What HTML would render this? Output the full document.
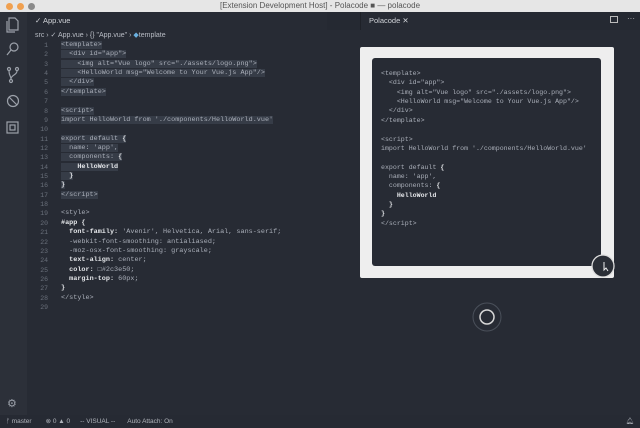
<!DOCTYPE html>
<html><head><style>
*{margin:0;padding:0;box-sizing:border-box}
body{width:640px;height:428px;overflow:hidden;background:#272b34;font-family:"Liberation Sans",sans-serif;position:relative;color:#c5c8ce}
.title{position:absolute;left:0;top:0;width:640px;height:12px;background:#e6e6e6;font-size:8px;color:#555;text-align:center;line-height:12px}
.dot{position:absolute;top:3px;width:7px;height:7px;border-radius:50%}
.act{position:absolute;left:0;top:12px;width:27px;height:403px;background:#2c3039}
.tabs{position:absolute;left:27px;top:12px;width:613px;height:18px;background:#252932}
.tab{position:absolute;top:0;height:18px;line-height:18px;font-size:7.5px;color:#d0d3d8;padding-left:8px}
.bc{position:absolute;left:35px;top:31px;font-size:7px;color:#b8bcc4}
pre{position:absolute;font-family:"Liberation Mono",monospace;font-size:6.8px;line-height:9.36px;color:#a9aeb8;white-space:pre}
.sel{background:#363c47}
b{color:#e3e5e8;font-weight:bold}
.ln{position:absolute;left:30px;top:41px;width:18px;text-align:right;font-family:"Liberation Mono",monospace;font-size:6.5px;line-height:9.36px;color:#6a707b}
.status{position:absolute;left:0;top:415px;width:640px;height:13px;background:#262a33;font-size:6.5px;color:#b0b4bb;line-height:13px}
</style></head><body>
<div class="title"><span class="dot" style="left:6px;background:#f0a050"></span><span class="dot" style="left:17px;background:#f0a050"></span><span class="dot" style="left:28px;background:#8a8a8a"></span>[Extension Development Host] - Polacode ■ — polacode</div>
<div class="act">
<svg width="27" height="140" viewBox="0 0 27 140" fill="none" stroke="#9ca1aa" stroke-width="1.2">
<path d="M9 6h6l3 3v9h-9z M7 9v11h8"/>
<circle cx="14" cy="35" r="4"/><path d="M11 38l-4 5"/>
<circle cx="9" cy="57" r="1.5"/><circle cx="17" cy="57" r="1.5"/><circle cx="11" cy="69" r="1.5"/><path d="M9 59c0 5 2 5 2 8M17 59c0 4-6 4-6 8"/>
<circle cx="13" cy="89" r="5.5"/><path d="M9 85l8 8"/>
<rect x="7" y="110" width="11" height="11"/><rect x="10" y="113" width="5" height="5"/>
</svg>
<div style="position:absolute;left:7px;top:385px;font-size:11px;color:#9ca1aa">⚙</div>
</div>
<div class="tabs">
<div class="tab" style="left:0;width:300px;background:#272b34">✓ App.vue</div>
<div class="tab" style="left:333px;width:80px;background:#272b34;border-left:1px solid #1e2128">Polacode ✕</div>
<div style="position:absolute;left:583px;top:4px;width:8px;height:7px;border:1px solid #bbb"></div>
<div style="position:absolute;left:600px;top:2px;font-size:8px;color:#bbb">···</div>
</div>
<div class="bc">src › ✓ App.vue › {} "App.vue" › <span style="color:#6ab0e0">◆</span>template</div>
<div class="ln">1<br>2<br>3<br>4<br>5<br>6<br>7<br>8<br>9<br>10<br>11<br>12<br>13<br>14<br>15<br>16<br>17<br>18<br>19<br>20<br>21<br>22<br>23<br>24<br>25<br>26<br>27<br>28<br>29</div>
<pre style="left:61px;top:41px"><span class="sel">&lt;template&gt;</span>
<span class="sel">  &lt;div id="app"&gt;</span>
<span class="sel">    &lt;img alt="Vue logo" src="./assets/logo.png"&gt;</span>
<span class="sel">    &lt;HelloWorld msg="Welcome to Your Vue.js App"/&gt;</span>
<span class="sel">  &lt;/div&gt;</span>
<span class="sel">&lt;/template&gt;</span>

<span class="sel">&lt;script&gt;</span>
<span class="sel">import HelloWorld from './components/HelloWorld.vue'</span>

<span class="sel">export default <b>{</b></span>
<span class="sel">  name: 'app',</span>
<span class="sel">  components: <b>{</b></span>
<span class="sel">    <b>HelloWorld</b></span>
<span class="sel">  <b>}</b></span>
<span class="sel"><b>}</b></span>
<span class="sel">&lt;/script&gt;</span>

&lt;style&gt;
<b>#app {</b>
  <b>font-family:</b> 'Avenir', Helvetica, Arial, sans-serif;
  -webkit-font-smoothing: antialiased;
  -moz-osx-font-smoothing: grayscale;
  <b>text-align:</b> center;
  <b>color:</b> □#2c3e50;
  <b>margin-top:</b> 60px;
<b>}</b>
&lt;/style&gt;</pre>
<div style="position:absolute;left:360px;top:47px;width:254px;height:231px;background:#eeeeee;border-radius:2px"></div>
<div style="position:absolute;left:372px;top:58px;width:229px;height:208px;background:#272b34;border-radius:3px"></div>
<pre style="left:381px;top:69px;font-size:6.6px">&lt;template&gt;
  &lt;div id="app"&gt;
    &lt;img alt="Vue logo" src="./assets/logo.png"&gt;
    &lt;HelloWorld msg="Welcome to Your Vue.js App"/&gt;
  &lt;/div&gt;
&lt;/template&gt;

&lt;script&gt;
import HelloWorld from './components/HelloWorld.vue'

export default <b>{</b>
  name: 'app',
  components: <b>{</b>
    <b>HelloWorld</b>
  <b>}</b>
<b>}</b>
&lt;/script&gt;</pre>
<svg style="position:absolute;left:590px;top:253px" width="28" height="28"><circle cx="13" cy="13" r="11" fill="#2a2e36" stroke="#ddd" stroke-width="1.3"/><path d="M14 9l0 8 2-2 2 3" stroke="#eee" fill="none"/></svg>
<svg style="position:absolute;left:470px;top:300px" width="34" height="34"><circle cx="17" cy="17" r="14" fill="none" stroke="#4a505a" stroke-width="1"/><circle cx="17" cy="17" r="7" fill="none" stroke="#d8d8d8" stroke-width="1.5"/></svg>
<div class="status"><span style="margin-left:6px">ᚠ master</span><span style="margin-left:14px">⊗ 0 ▲ 0</span><span style="margin-left:10px">-- VISUAL --</span><span style="margin-left:12px">Auto Attach: On</span><span style="position:absolute;right:6px">🔔︎</span></div>
</body></html>
